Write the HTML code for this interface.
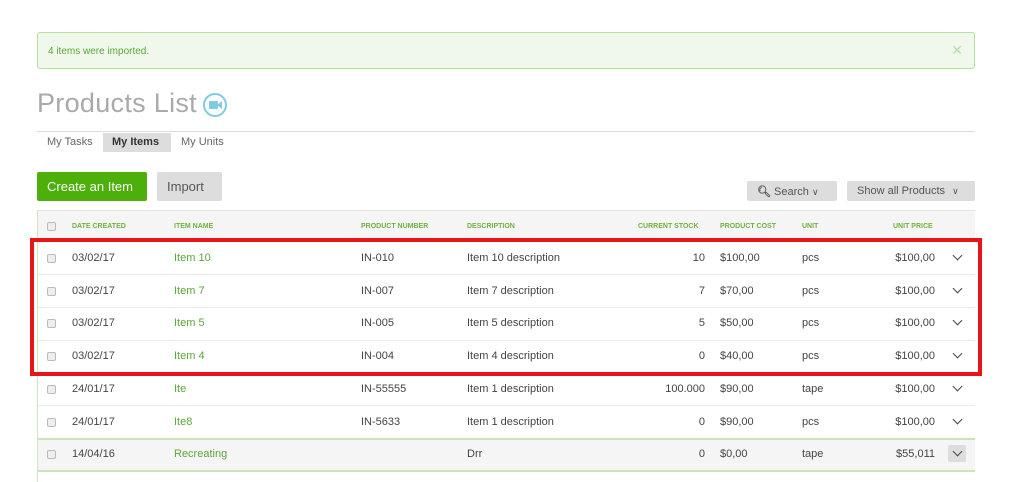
<!DOCTYPE html>
<html><head><meta charset="utf-8"><style>
*{box-sizing:border-box;margin:0;padding:0}
body{width:1024px;height:482px;background:#fff;font-family:"Liberation Sans",sans-serif;position:relative;overflow:hidden;color:#444}
.abs{position:absolute}
.alert{left:37px;top:32px;width:938px;height:37px;border:1px solid #b5e0a0;background:#f0f8ec;border-radius:3px;font-size:10px;color:#5aa83a;padding:13px 10px}
.alert .x{position:absolute;right:11px;top:9px;color:#b8dcaa;font-size:14px}
h1{position:absolute;left:37px;top:88px;font-weight:normal;font-size:27px;color:#aaa;letter-spacing:.3px}
.cam{left:203px;top:93px;width:24px;height:24px;border:2px solid #7fcbe0;border-radius:50%}
.tabline{left:37px;top:131px;width:938px;height:1px;background:#ddd}
.tab{top:133px;height:19px;font-size:11px;padding:3px 0;color:#666}
.btn{top:172px;height:29px;font-size:13px;border-radius:2px;padding:7px 10px}
.gbtn{top:181px;height:20px;background:#ddd;border-radius:2px;font-size:11px;color:#555;padding:4px 10px}
.th{top:210px;left:37px;width:938px;height:32px;background:#f5f5f5;border-top:1px solid #e5e5e5;border-left:1px solid #cde6c0}
.hd{font-size:7px;font-weight:bold;color:#6db33f;top:223px}
.row{left:37px;width:938px;height:33px;border-bottom:1px solid #e8e8e8;border-left:1px solid #cde6c0}
.c{font-size:11px;color:#444;position:absolute}
.cb{width:9px;height:9px;border:1px solid #bbb;border-radius:2px;background:#eee;position:absolute}
.chev{position:absolute;width:7px;height:7px;border-right:1.5px solid #444;border-bottom:1.5px solid #444;transform:rotate(45deg)}
</style></head><body>
<div class="abs alert">4 items were imported.<span class="x">✕</span></div>
<h1>Products List</h1>
<div class="abs cam"><div class="abs" style="left:4px;top:6px;width:9px;height:8px;background:#7fcbe0;border-radius:1px"></div><div class="abs" style="left:12px;top:6px;width:0;height:0;border-top:4px solid transparent;border-bottom:4px solid transparent;border-right:5px solid #7fcbe0"></div></div>
<div class="abs tabline"></div>
<div class="abs tab" style="left:47px">My Tasks</div>
<div class="abs tab" style="left:103px;width:68px;background:#ddd;font-weight:bold;color:#333;padding-left:9px">My Items</div>
<div class="abs tab" style="left:181px">My Units</div>
<div class="abs btn" style="left:37px;width:110px;background:#4caf0a;color:#fff">Create an Item</div>
<div class="abs btn" style="left:157px;width:65px;background:#ddd;color:#555">Import</div>
<div class="abs gbtn" style="left:747px;width:90px"><b style="font-size:11px">&#x1F50D;&#xFE0E;</b> Search <span style="font-size:9px">&#x2228;</span></div>
<div class="abs gbtn" style="left:847px;width:128px">Show all Products <span style="font-size:9px;margin-left:4px">&#x2228;</span></div>
<div class="abs th"></div>
<div class="cb" style="left:47px;top:222px"></div>
<div class="abs hd" style="left:72px">DATE CREATED</div>
<div class="abs hd" style="left:174px">ITEM NAME</div>
<div class="abs hd" style="left:361px">PRODUCT NUMBER</div>
<div class="abs hd" style="left:467px">DESCRIPTION</div>
<div class="abs hd" style="left:638px">CURRENT STOCK</div>
<div class="abs hd" style="left:720px">PRODUCT COST</div>
<div class="abs hd" style="left:802px">UNIT</div>
<div class="abs hd" style="left:893px">UNIT PRICE</div>
<div id="rows"></div>
<script></script>
<!-- rows -->
<div class="abs row" style="top:242px"></div>
<div class="abs row" style="top:275px"></div>
<div class="abs row" style="top:308px"></div>
<div class="abs row" style="top:340px"></div>
<div class="abs row" style="top:373px"></div>
<div class="abs row" style="top:406px"></div>
<div class="abs row" style="top:438px;background:#f5f5f5;border-top:2px solid #c8e6b8;border-bottom:2px solid #c8e6b8;height:34px"></div>
<div class="abs" style="left:37px;top:472px;width:1px;height:10px;background:#cde6c0"></div>

<div class="cb" style="left:47px;top:254px"></div><span class="c" style="left:72px;top:252px">03/02/17</span><span class="c" style="left:174px;top:252px;color:#5aa83a">Item 10</span><span class="c" style="left:361px;top:252px">IN-010</span><span class="c" style="left:467px;top:252px">Item 10 description</span><span class="c" style="right:319px;top:252px">10</span><span class="c" style="left:720px;top:252px">$100,00</span><span class="c" style="left:802px;top:252px">pcs</span><span class="c" style="right:89px;top:252px">$100,00</span><div class="chev" style="left:954px;top:252px"></div>
<div class="cb" style="left:47px;top:287px"></div><span class="c" style="left:72px;top:285px">03/02/17</span><span class="c" style="left:174px;top:285px;color:#5aa83a">Item 7</span><span class="c" style="left:361px;top:285px">IN-007</span><span class="c" style="left:467px;top:285px">Item 7 description</span><span class="c" style="right:319px;top:285px">7</span><span class="c" style="left:720px;top:285px">$70,00</span><span class="c" style="left:802px;top:285px">pcs</span><span class="c" style="right:89px;top:285px">$100,00</span><div class="chev" style="left:954px;top:285px"></div>
<div class="cb" style="left:47px;top:319px"></div><span class="c" style="left:72px;top:317px">03/02/17</span><span class="c" style="left:174px;top:317px;color:#5aa83a">Item 5</span><span class="c" style="left:361px;top:317px">IN-005</span><span class="c" style="left:467px;top:317px">Item 5 description</span><span class="c" style="right:319px;top:317px">5</span><span class="c" style="left:720px;top:317px">$50,00</span><span class="c" style="left:802px;top:317px">pcs</span><span class="c" style="right:89px;top:317px">$100,00</span><div class="chev" style="left:954px;top:317px"></div>
<div class="cb" style="left:47px;top:352px"></div><span class="c" style="left:72px;top:350px">03/02/17</span><span class="c" style="left:174px;top:350px;color:#5aa83a">Item 4</span><span class="c" style="left:361px;top:350px">IN-004</span><span class="c" style="left:467px;top:350px">Item 4 description</span><span class="c" style="right:319px;top:350px">0</span><span class="c" style="left:720px;top:350px">$40,00</span><span class="c" style="left:802px;top:350px">pcs</span><span class="c" style="right:89px;top:350px">$100,00</span><div class="chev" style="left:954px;top:350px"></div>
<div class="cb" style="left:47px;top:385px"></div><span class="c" style="left:72px;top:383px">24/01/17</span><span class="c" style="left:174px;top:383px;color:#5aa83a">Ite</span><span class="c" style="left:361px;top:383px">IN-55555</span><span class="c" style="left:467px;top:383px">Item 1 description</span><span class="c" style="right:319px;top:383px">100.000</span><span class="c" style="left:720px;top:383px">$90,00</span><span class="c" style="left:802px;top:383px">tape</span><span class="c" style="right:89px;top:383px">$100,00</span><div class="chev" style="left:954px;top:383px"></div>
<div class="cb" style="left:47px;top:418px"></div><span class="c" style="left:72px;top:416px">24/01/17</span><span class="c" style="left:174px;top:416px;color:#5aa83a">Ite8</span><span class="c" style="left:361px;top:416px">IN-5633</span><span class="c" style="left:467px;top:416px">Item 1 description</span><span class="c" style="right:319px;top:416px">0</span><span class="c" style="left:720px;top:416px">$90,00</span><span class="c" style="left:802px;top:416px">pcs</span><span class="c" style="right:89px;top:416px">$100,00</span><div class="chev" style="left:954px;top:416px"></div>
<div class="cb" style="left:47px;top:450px"></div><span class="c" style="left:72px;top:448px">14/04/16</span><span class="c" style="left:174px;top:448px;color:#5aa83a">Recreating</span><span class="c" style="left:467px;top:448px">Drr</span><span class="c" style="right:319px;top:448px">0</span><span class="c" style="left:720px;top:448px">$0,00</span><span class="c" style="left:802px;top:448px">tape</span><span class="c" style="right:89px;top:448px">$55,011</span>
<div class="abs" style="left:948px;top:445px;width:18px;height:17px;background:#ddd;border-radius:2px"></div><div class="chev" style="left:954px;top:448px"></div>

<div class="abs" style="left:30px;top:238px;width:952px;height:138px;border:4px solid #e8141a"></div>
</body></html>
